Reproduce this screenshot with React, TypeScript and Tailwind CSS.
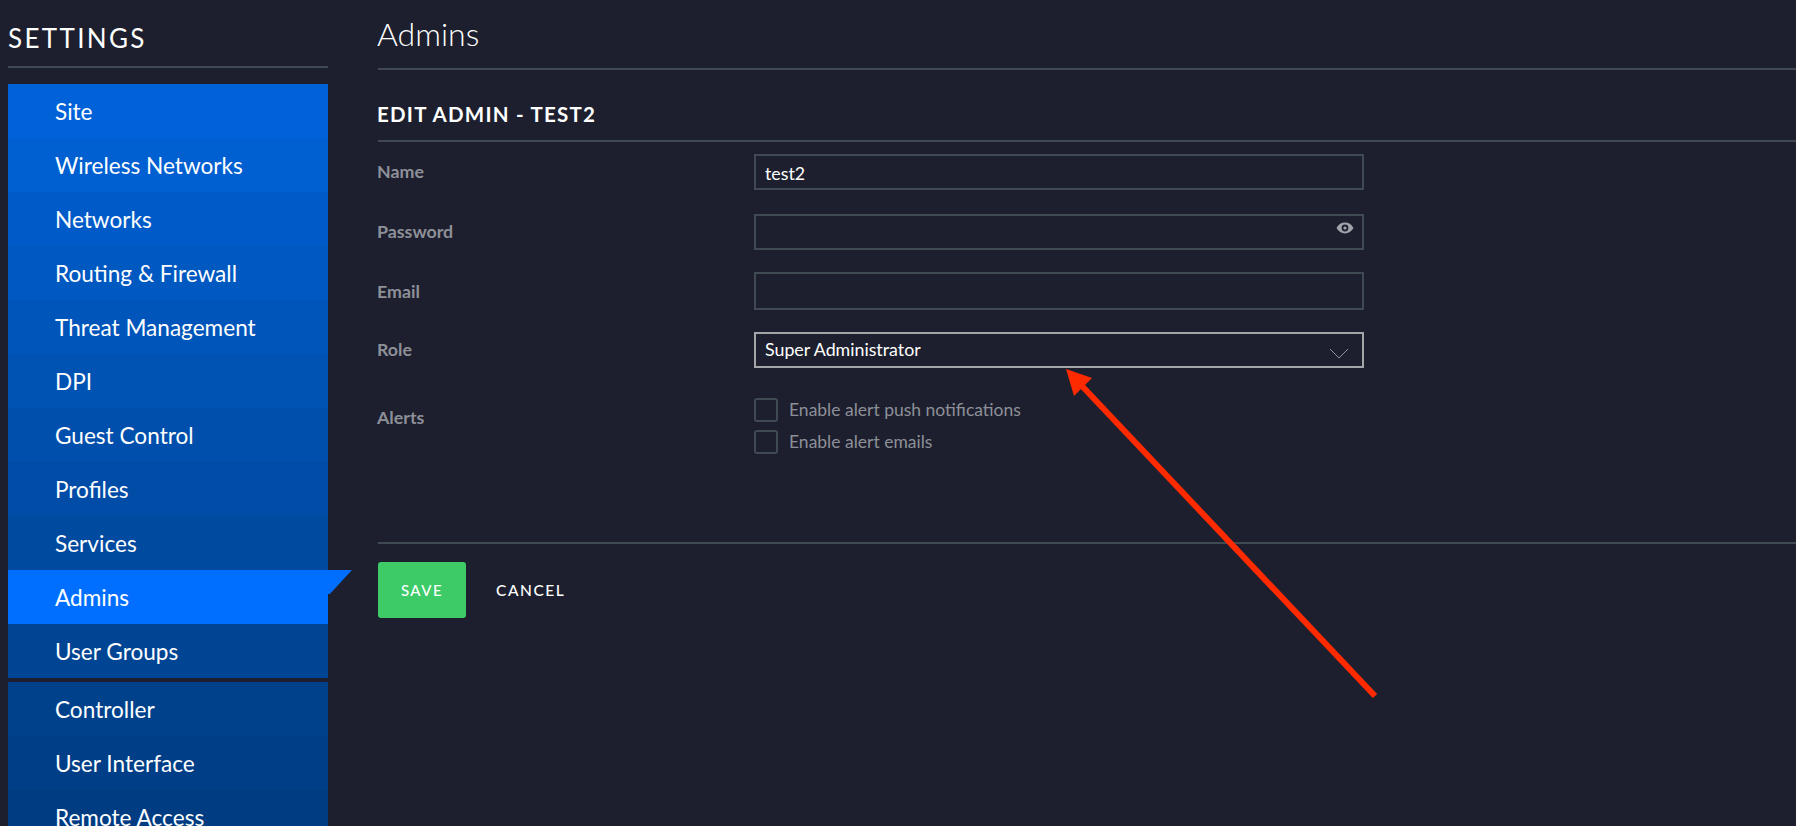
const rows1 = [
  ["Site", "bg-[#0062d8]"],
  ["Wireless Networks", "bg-[#005fd1]"],
  ["Networks", "bg-[#005bc9]"],
  ["Routing & Firewall", "bg-[#0058c1]"],
  ["Threat Management", "bg-[#0055ba]"],
  ["DPI", "bg-[#0052b3]"],
  ["Guest Control", "bg-[#004fac]"],
  ["Profiles", "bg-[#004ca6]"],
  ["Services", "bg-[#004aa0]"],
  ["Admins", "bg-[#006fff]"],
  ["User Groups", "bg-[#004594]"],
];
const rows2 = [
  ["Controller", "bg-[#00418c]"],
  ["User Interface", "bg-[#003f87]"],
  ["Remote Access", "bg-[#003c82]"],
];

function Row({ label, bg }: { label: string; bg: string }) {
  return (
    <div className={`relative flex h-[54px] shrink-0 items-center pl-[47px] pt-[2px] text-[22.6px] text-white ${bg}`}>
      {label}
      {label === "Admins" && (
        <svg className="absolute left-full top-0" width="24" height="24" viewBox="0 0 24 24">
          <polygon points="0,0 24,0 0,26" fill="#006fff" />
        </svg>
      )}
    </div>
  );
}

function Label({ children, className = "pb-[2px]" }: { children: string; className?: string }) {
  return <div className={`-ml-px w-[377px] shrink-0 text-[17.8px] font-bold text-[#8d9098] ${className}`}>{children}</div>;
}

export default function App() {
  return (
    <div className="relative flex h-[826px] w-[1796px] overflow-hidden bg-[#1d1f2e] font-['Lato','Liberation_Sans',sans-serif]">
      <aside className="w-[328px] shrink-0 pl-2">
        <div className="flex h-[68px] items-end border-b-2 border-[#3f4a52] pb-[13px] text-[26px] leading-[30px] tracking-[0.09em] text-white">
          SETTINGS
        </div>
        <div className="mt-4 flex flex-col">
          {rows1.map(([l, b]) => (
            <Row key={l} label={l} bg={b} />
          ))}
        </div>
        <div className="mt-1 flex flex-col">
          {rows2.map(([l, b]) => (
            <Row key={l} label={l} bg={b} />
          ))}
        </div>
      </aside>
      <main className="ml-[50px] flex-1">
        <div className="flex h-[70px] items-end border-b-2 border-[#3f4a52] pb-[16px] text-[32px] font-light leading-[36px] text-white">
          <span className="-ml-px">Admins</span>
        </div>
        <div className="flex h-[72px] items-end border-b-2 border-[#3f4a52] pb-[14px] text-[20.5px] font-bold leading-[24px] tracking-[0.06em] text-white">
          <span className="-ml-px">EDIT ADMIN - TEST2</span>
        </div>
        <div className="mt-3 flex flex-col">
          <div className="flex h-[36px] items-center">
            <Label>Name</Label>
            <div className="flex h-[36px] w-[610px] items-center border-2 border-[#3f4a52] px-[9px] pt-[2px] text-[17.8px] text-white">test2</div>
          </div>
          <div className="mt-6 flex h-[36px] items-center">
            <Label>Password</Label>
            <div className="relative h-[36px] w-[610px] border-2 border-[#3f4a52]">
              <svg className="absolute right-[8px] top-[6px]" width="18" height="12" viewBox="0 0 18 12">
                <path fillRule="evenodd" fill="#a0a3aa" d="M0.5 6C2.5 2.4 5.5 0.6 9 0.6S15.500 2.400 17.500 6C15.500 9.600 12.500 11.400 9 11.400S2.500 9.600 0.500 6ZM9 2.600A3.400 3.400 0 1 0 9 9.400A3.400 3.400 0 1 0 9 2.600ZM9 4.400A1.600 1.600 0 1 1 9 7.600A1.600 1.600 0 1 1 9 4.400Z" />
              </svg>
            </div>
          </div>
          <div className="mt-[22px] flex h-[38px] items-center">
            <Label className="pb-0">Email</Label>
            <div className="h-[38px] w-[610px] border-2 border-[#3f4a52]" />
          </div>
          <div className="mt-[22px] flex h-[36px] items-center">
            <Label>Role</Label>
            <div className="flex h-[36px] w-[610px] items-center justify-between border-2 border-[#a3a5a9] pb-[2px] pl-[9px] pr-[13px] text-[17.8px] text-white">
              Super Administrator
              <svg className="mt-[8px]" width="20" height="11" viewBox="0 0 20 11">
                <path d="M1 1L10 10L19 1" fill="none" stroke="#8f9299" strokeWidth="1" />
              </svg>
            </div>
          </div>
          <div className="mt-[30px] flex items-start">
            <Label className="pt-[6px]">Alerts</Label>
            <div className="flex flex-col gap-2">
              <div className="flex h-6 items-center gap-[11px] text-[17.5px] text-[#8d9098]">
                <div className="h-6 w-6 rounded-[3px] border-2 border-[#3f4a52]" />
                Enable alert push notifications
              </div>
              <div className="flex h-6 items-center gap-[11px] text-[17.5px] text-[#8d9098]">
                <div className="h-6 w-6 rounded-[3px] border-2 border-[#3f4a52]" />
                Enable alert emails
              </div>
            </div>
          </div>
        </div>
        <div className="mt-[88px] border-t-2 border-[#3f4a52]" />
        <div className="mt-[18px] flex items-center">
          <button className="h-[56px] w-[88px] rounded-[3px] bg-[#3ccb67] text-[15px] font-medium tracking-[0.1em] text-white">SAVE</button>
          <button className="ml-[30px] mt-[2px] text-[15.500px] font-medium tracking-[0.1em] text-white">CANCEL</button>
        </div>
      </main>
      <svg className="pointer-events-none absolute left-0 top-0" width="1796" height="826" viewBox="0 0 1796 826">
        <line x1="1375" y1="696" x2="1082" y2="386" stroke="#ff2a00" strokeWidth="6" />
        <polygon points="1066,369 1092,378 1074,396" fill="#ff2a00" />
      </svg>
    </div>
  );
}
